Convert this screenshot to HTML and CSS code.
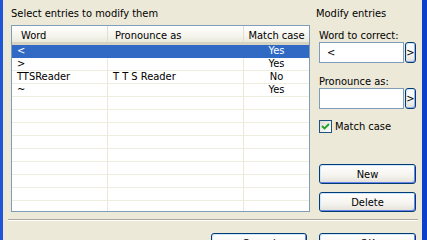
FILE: index.html
```html
<!DOCTYPE html>
<html lang="en">
<head>
  <meta charset="UTF-8">
  <title>Pronunciation entries</title>
  <link rel="stylesheet" href="styles.css">
</head>
<body>
  <div class="window">
    <div class="dialog">
      <div class="main">
        <section class="entries">
          <div class="caption">Select entries to modify them</div>
          <div class="list">
            <div class="row head"><div>Word</div><div>Pronounce as</div><div>Match case</div></div>
            <div class="row selected"><div>&lt;</div><div></div><div>Yes</div></div>
            <div class="row"><div>&gt;</div><div></div><div>Yes</div></div>
            <div class="row"><div>TTSReader</div><div>T T S Reader</div><div>No</div></div>
            <div class="row"><div>~</div><div></div><div>Yes</div></div>
            <div class="row"><div></div><div></div><div></div></div>
            <div class="row"><div></div><div></div><div></div></div>
            <div class="row"><div></div><div></div><div></div></div>
            <div class="row"><div></div><div></div><div></div></div>
            <div class="row"><div></div><div></div><div></div></div>
            <div class="row"><div></div><div></div><div></div></div>
            <div class="row"><div></div><div></div><div></div></div>
            <div class="row"><div></div><div></div><div></div></div>
            <div class="row"><div></div><div></div><div></div></div>
          </div>
        </section>

        <section class="modify">
          <div class="caption">Modify entries</div>
          <div class="field">
            <div class="label">Word to correct:</div>
            <div class="combo">
              <div class="input">&lt;</div>
              <button class="small">&gt;</button>
            </div>
            <div class="label second">Pronounce as:</div>
            <div class="combo">
              <div class="input"></div>
              <button class="small">&gt;</button>
            </div>
            <label class="check">
              <span class="box">
                <svg width="9" height="9" viewBox="0 0 9 9"><path d="M1 4 L3.5 6.5 L8 2" fill="none" stroke="#21a121" stroke-width="1.8"/></svg>
              </span>
              Match case
            </label>
            <div class="edit-buttons">
              <button>New</button>
              <button>Delete</button>
            </div>
          </div>
        </section>
      </div>

      <div class="sep"></div>

      <div class="actions">
        <button class="cancel">Cancel</button>
        <button class="ok">OK</button>
      </div>
    </div>
  </div>
</body>
</html>
```

FILE: styles.css
```css
* { box-sizing: border-box; }
body {
  margin: 0;
  width: 427px;
  height: 240px;
  overflow: hidden;
  font: 11px "DejaVu Sans Condensed", "Liberation Sans", sans-serif;
  color: #000;
  background: #ece9d8;
}
.window {
  display: flex;
  height: 240px;
  border-left: 3px solid #1f55d8;
  border-right: 5px solid #0c40c8;
  background: #ece9d8;
}
.dialog { flex: 1; }
.main {
  display: flex;
  padding: 7px 0 0 8px;
}
.caption { height: 18px; line-height: 13px; }

/* list view */
.entries { width: 299px; }
.list {
  height: 187px;
  border: 1px solid #7f9db9;
  background: #fff;
  overflow: hidden;
}
.row {
  display: grid;
  grid-template-columns: 96px 136px 1fr;
  height: 13px;
  border-bottom: 1px solid #efedde;
}
.row > div {
  border-right: 1px solid #ece9d8;
  padding-left: 5px;
  line-height: 12px;
  white-space: nowrap;
}
.row > div:last-child { border-right: none; text-align: center; padding-left: 0; }
.row.head {
  height: 19px;
  background: linear-gradient(#fff, #f3f2ea 70%, #ebeadb);
  border-bottom: 3px solid #d6d3c2;
}
.row.head > div {
  padding: 3px 0 0 9px;
  line-height: 13px;
  border-right: 1px solid #e2dfd0;
}
.row.head > div:nth-child(2) { padding-left: 7px; }
.row.head > div:last-child { padding-left: 0; border-right: none; }
.row.selected { background: #316ac5; color: #fff; border-bottom-color: #316ac5; }
.row.selected > div { border-right-color: #316ac5; }

/* right panel */
.modify { margin-left: 6px; width: 100px; }
.field { padding-left: 3px; }
.label { line-height: 13px; margin-top: 4px; }
.label.second { margin-top: 12px; }
.combo { display: flex; gap: 1px; height: 21px; }
.input {
  width: 85px;
  height: 21px;
  border: 1px solid #7f9db9;
  background: #fff;
  padding: 3px 0 0 7px;
  line-height: 13px;
}
.check {
  display: flex;
  align-items: center;
  gap: 3px;
  margin-top: 11px;
  height: 13px;
}
.box {
  width: 13px;
  height: 13px;
  border: 1px solid #1c5180;
  background: linear-gradient(135deg, #dcdcd7, #fff);
  display: flex;
  align-items: center;
  justify-content: center;
}
.edit-buttons {
  display: flex;
  flex-direction: column;
  gap: 8px;
  margin-top: 31px;
}

button {
  font: inherit;
  color: #000;
  height: 21px;
  border: 1px solid #003c74;
  border-radius: 3px;
  background: linear-gradient(#fff, #f4f3ee 60%, #e3e0d6);
  box-shadow: inset 1px 1px 0 #cee7ff, inset -1px -1px 0 #6982ee;
  padding: 0;
}
.edit-buttons button { width: 97px; height: 20px; }
button.small {
  width: 11px;
  font-size: 11px;
  line-height: 19px;
  box-shadow: inset 1px 1px 0 #cee7ff, inset -1px -1px 0 #98b0ec;
}

.sep {
  margin: 7px 4px 0 5px;
  height: 2px;
  border-top: 1px solid #aca899;
  border-bottom: 1px solid #fff;
}
.actions {
  display: flex;
  justify-content: flex-end;
  gap: 12px;
  margin-top: 12px;
  padding-right: 6px;
}
.actions .cancel { width: 96px; }
.actions .ok { width: 97px; }
```
